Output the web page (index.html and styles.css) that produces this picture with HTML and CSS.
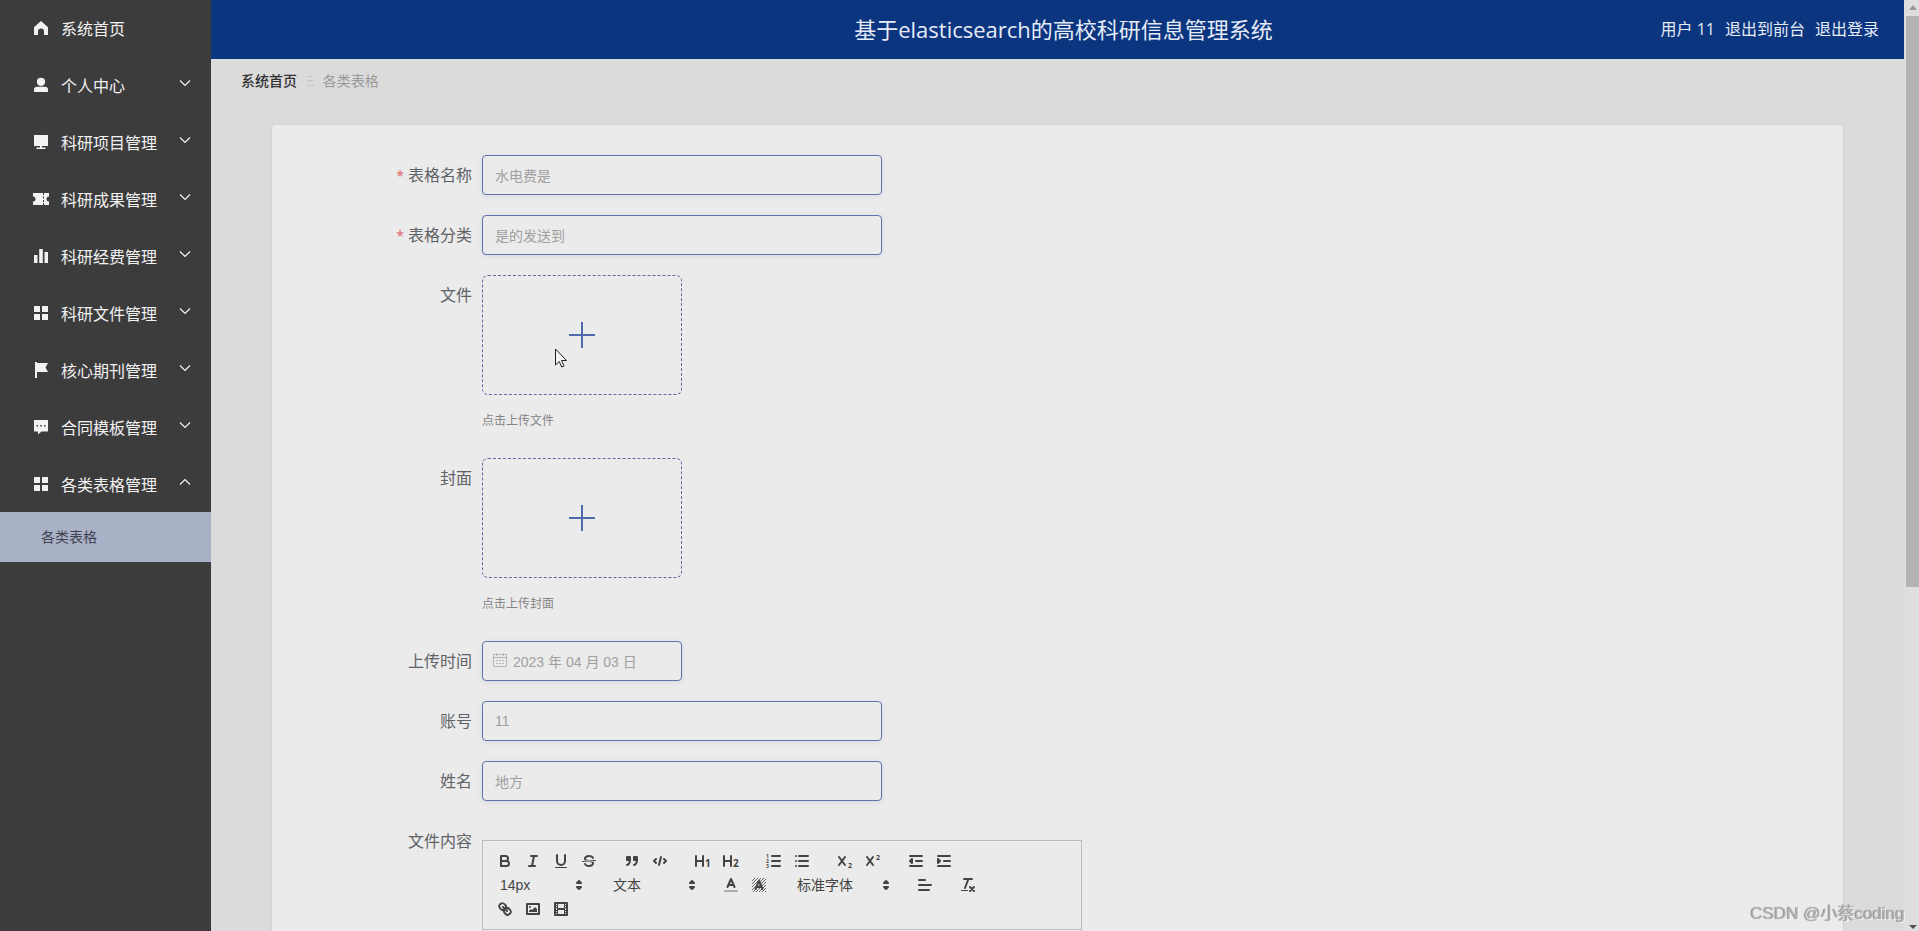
FILE: index.html
```html
<!DOCTYPE html>
<html lang="zh-CN">
<head>
  <meta charset="UTF-8">
  <meta name="viewport" content="width=device-width, initial-scale=1.0">
  <title>基于elasticsearch的高校科研信息管理系统</title>
  <link rel="stylesheet" href="styles.css">
</head>
<body>
  <!-- 公用图标 -->
  <svg class="sprite" aria-hidden="true">
    <symbol id="i-down" viewBox="0 0 12 12"><path d="M1 3.5l5 5 5-5" fill="none" stroke="currentColor" stroke-width="1.2"/></symbol>
    <symbol id="i-up" viewBox="0 0 12 12"><path d="M1 8.5l5-5 5 5" fill="none" stroke="currentColor" stroke-width="1.2"/></symbol>
    <symbol id="i-menu" viewBox="0 0 16 16"><path d="M1 1h6v6H1zM9 1h6v6H9zM1 9h6v6H1zM9 9h6v6H9z" fill="currentColor"/></symbol>
    <symbol id="i-plus" viewBox="0 0 28 28"><path d="M14 1v26M1 14h26" stroke="currentColor" stroke-width="2"/></symbol>
    <symbol id="i-picker" viewBox="0 0 18 18"><path class="stroke fill" d="M7 11l2 2 2-2zM7 7l2-2 2 2z"/></symbol>
  </svg>

  <div class="layout">
    <nav class="sidebar">
      <ul class="menu">
        <li><a class="menu-item" href="#">
          <svg class="menu-icon" viewBox="0 0 16 16"><path d="M8 1L1 7.2V15h4v-3.600a3 3 0 0 1 6 0V15h4V7.200z" fill="currentColor"/></svg>
          <span>系统首页</span></a></li>
        <li><a class="menu-item" href="#">
          <svg class="menu-icon" viewBox="0 0 16 16"><circle cx="8" cy="4.800" r="4.100" fill="currentColor"/><path d="M1 15v-2.500Q1 9.800 4 9.800h8q3 0 3 2.700V15z" fill="currentColor"/></svg>
          <span>个人中心</span><svg class="arrow"><use href="#i-down"/></svg></a></li>
        <li><a class="menu-item" href="#">
          <svg class="menu-icon" viewBox="0 0 16 16"><path d="M1 1h14v11H1zM7 12h2v1.500h3.500V15h-9v-1.500H7z" fill="currentColor"/></svg>
          <span>科研项目管理</span><svg class="arrow"><use href="#i-down"/></svg></a></li>
        <li><a class="menu-item" href="#">
          <svg class="menu-icon" viewBox="0 0 16 16"><path d="M0 2h10v2h1V2h5v3.500a2.500 2.500 0 0 0 0 5V14h-5v-2h-1v2H0v-3.500a2.500 2.500 0 0 0 0-5zM10 5.500v2h1v-2zM10 9v2h1V9z" fill="currentColor" fill-rule="evenodd"/></svg>
          <span>科研成果管理</span><svg class="arrow"><use href="#i-down"/></svg></a></li>
        <li><a class="menu-item" href="#">
          <svg class="menu-icon" viewBox="0 0 16 16"><path d="M1 7h3.500v8H1zM6.200 1h3.600v14H6.200zM11.500 4H15v11h-3.500z" fill="currentColor"/></svg>
          <span>科研经费管理</span><svg class="arrow"><use href="#i-down"/></svg></a></li>
        <li><a class="menu-item" href="#">
          <svg class="menu-icon"><use href="#i-menu"/></svg>
          <span>科研文件管理</span><svg class="arrow"><use href="#i-down"/></svg></a></li>
        <li><a class="menu-item" href="#">
          <svg class="menu-icon" viewBox="0 0 16 16"><path d="M2 0h2v1h11l-2.500 4.500L15 10H4v6H2z" fill="currentColor"/></svg>
          <span>核心期刊管理</span><svg class="arrow"><use href="#i-down"/></svg></a></li>
        <li><a class="menu-item" href="#">
          <svg class="menu-icon" viewBox="0 0 16 16"><path d="M1 1h14v11.500H8.500L5 15.500v-3H1zM3.500 6v1.500H5V6zM7.200 6v1.500h1.600V6zM11 6v1.500h1.500V6z" fill="currentColor" fill-rule="evenodd"/></svg>
          <span>合同模板管理</span><svg class="arrow"><use href="#i-down"/></svg></a></li>
        <li><a class="menu-item" href="#">
          <svg class="menu-icon"><use href="#i-menu"/></svg>
          <span>各类表格管理</span><svg class="arrow"><use href="#i-up"/></svg></a>
          <ul class="submenu">
            <li><a class="submenu-item" href="#">各类表格</a></li>
          </ul>
        </li>
      </ul>
    </nav>

    <div class="main">
      <header class="header">
        <h1 class="title">基于elasticsearch的高校科研信息管理系统</h1>
        <div class="user">
          <span>用户 11</span>
          <a href="#">退出到前台</a>
          <a href="#">退出登录</a>
        </div>
      </header>

      <div class="breadcrumb">
        <a href="#">系统首页</a>
        <span class="separator">Ξ</span>
        <span>各类表格</span>
      </div>

      <form class="card">
        <div class="form-item">
          <label class="required" for="name">表格名称</label>
          <input class="input" id="name" type="text" value="水电费是" readonly>
        </div>
        <div class="form-item">
          <label class="required" for="type">表格分类</label>
          <input class="input" id="type" type="text" value="是的发送到" readonly>
        </div>
        <div class="form-item">
          <label for="file">文件</label>
          <div>
            <button class="upload" id="file" type="button" aria-label="上传文件"><svg><use href="#i-plus"/></svg></button>
            <p class="tip">点击上传文件</p>
          </div>
        </div>
        <div class="form-item">
          <label for="cover">封面</label>
          <div>
            <button class="upload" id="cover" type="button" aria-label="上传封面"><svg><use href="#i-plus"/></svg></button>
            <p class="tip">点击上传封面</p>
          </div>
        </div>
        <div class="form-item">
          <label for="date">上传时间</label>
          <div class="date">
            <svg class="date-icon" viewBox="0 0 14 14"><path d="M.5 1.500h13v12H.5zM.5 4.500h13M3.500 0v3M10.500 0v3M3 7.500h2M6 7.500h2M9 7.500h2M3 10.500h2M6 10.500h2M9 10.500h2" fill="none" stroke="currentColor"/></svg>
            <input class="input" id="date" type="text" value="2023 年 04 月 03 日" readonly>
          </div>
        </div>
        <div class="form-item">
          <label for="account">账号</label>
          <input class="input" id="account" type="text" value="11" readonly>
        </div>
        <div class="form-item">
          <label for="realname">姓名</label>
          <input class="input" id="realname" type="text" value="地方" readonly>
        </div>
        <div class="form-item">
          <label for="content">文件内容</label>
          <div class="editor">
            <div class="toolbar">
              <span class="formats">
                <button type="button" aria-label="加粗"><svg viewBox="0 0 18 18"><path class="stroke" d="M5,4H9.5A2.5,2.5,0,0,1,9.500,9H5zM5,9h5.5A2.5,2.5,0,0,1,10.500,14H5z"/></svg></button>
                <button type="button" aria-label="斜体"><svg viewBox="0 0 18 18"><path class="stroke" d="M7 4h6M5 14h6M8 14L10 4"/></svg></button>
                <button type="button" aria-label="下划线"><svg viewBox="0 0 18 18"><path class="stroke" d="M5,3V9a4,4,0,0,0,8,0V3"/><rect class="fill" height="1" rx="0.5" width="12" x="3" y="15"/></svg></button>
                <button type="button" aria-label="删除线"><svg viewBox="0 0 18 18"><path class="stroke thin" d="M15.500 8.500L2.500 9.500"/><path class="fill" d="M9.007,8C6.542,7.791,6,7.519,6,6.5,6,5.792,7.283,5,9,5c1.571,0,2.765.679,2.969,1.309a1,1,0,0,0,1.9-.617C13.356,4.106,11.354,3,9,3,6.2,3,4,4.538,4,6.5a3.2,3.2,0,0,0,.5,1.843Z"/><path class="fill" d="M8.984,10C11.457,10.208,12,10.479,12,11.5c0,0.708-1.283,1.5-3,1.5-1.571,0-2.765-.679-2.969-1.309a1,1,0,1,0-1.9.617C4.644,13.894,6.646,15,9,15c2.8,0,5-1.538,5-3.5a3.2,3.2,0,0,0-.5-1.843Z"/></svg></button>
              </span>
              <span class="formats">
                <button type="button" aria-label="引用"><svg viewBox="0 0 18 18"><path class="stroke fill" d="M4 5h3v3H4zM11 5h3v3h-3z"/><path class="stroke" d="M7,8c0,4.031-3,5-3,5M14,8c0,4.031-3,5-3,5"/></svg></button>
                <button type="button" aria-label="代码块"><svg viewBox="0 0 18 18"><path class="stroke" d="M5 7L3 9l2 2M13 7l2 2-2 2M10 5L8 13"/></svg></button>
              </span>
              <span class="formats">
                <button type="button" aria-label="标题1"><svg viewBox="0 0 18 18"><path class="stroke" d="M2 4v10M9 4v10M2 9h7"/><text class="num" x="11" y="15">1</text></svg></button>
                <button type="button" aria-label="标题2"><svg viewBox="0 0 18 18"><path class="stroke" d="M2 4v10M9 4v10M2 9h7"/><text class="num" x="11" y="15">2</text></svg></button>
              </span>
              <span class="formats">
                <button type="button" aria-label="有序列表"><svg viewBox="0 0 18 18"><path class="stroke" d="M7 4h8M7 9h8M7 14h8"/><text class="tiny" x="1" y="6">1</text><text class="tiny" x="1" y="11">2</text><text class="tiny" x="1" y="16">3</text></svg></button>
                <button type="button" aria-label="无序列表"><svg viewBox="0 0 18 18"><path class="stroke" d="M6 4h9M6 9h9M6 14h9M3 4h0M3 9h0M3 14h0"/></svg></button>
              </span>
              <span class="formats">
                <button type="button" aria-label="下标"><svg viewBox="0 0 18 18"><path class="stroke" d="M3 5l6 8M9 5l-6 8"/><text class="sub" x="12" y="16">2</text></svg></button>
                <button type="button" aria-label="上标"><svg viewBox="0 0 18 18"><path class="stroke" d="M3 5l6 8M9 5l-6 8"/><text class="sub" x="12" y="8">2</text></svg></button>
              </span>
              <span class="formats">
                <button type="button" aria-label="减少缩进"><svg viewBox="0 0 18 18"><path class="stroke" d="M3 14h12M3 4h12M9 9h6"/><path class="stroke fill" d="M5 7v4L3 9z"/></svg></button>
                <button type="button" aria-label="增加缩进"><svg viewBox="0 0 18 18"><path class="stroke" d="M3 14h12M3 4h12M9 9h6"/><path class="stroke fill" d="M3 7v4l2-2z"/></svg></button>
              </span>
              <span class="formats picker">
                <select aria-label="字号"><option>14px</option></select>
                <svg><use href="#i-picker"/></svg>
              </span>
              <span class="formats picker">
                <select aria-label="段落"><option>文本</option></select>
                <svg><use href="#i-picker"/></svg>
              </span>
              <span class="formats">
                <button type="button" aria-label="文字颜色"><svg viewBox="0 0 18 18"><path class="stroke pale" d="M3 15h12"/><path class="stroke" d="M5.500 11L9 3l3.500 8M11.600 9H6.400"/></svg></button>
                <button type="button" aria-label="背景颜色"><svg viewBox="0 0 18 18"><path class="hatch" d="M2 5l3-3M2 8l6-6M2 11l9-9M2 14l12-12M3 16L16 3M6 16L16 6M9 16l7-7M12 16l4-4M15 16l1-1"/><path class="stroke" d="M5.500 13L9 5l3.500 8M11.600 11H6.400"/></svg></button>
              </span>
              <span class="formats picker picker-font">
                <select aria-label="字体"><option>标准字体</option></select>
                <svg><use href="#i-picker"/></svg>
              </span>
              <span class="formats">
                <button type="button" aria-label="对齐"><svg viewBox="0 0 18 18"><path class="stroke" d="M3 9h12M3 14h10M3 4h6"/></svg></button>
              </span>
              <span class="formats">
                <button type="button" aria-label="清除格式"><svg viewBox="0 0 18 18"><path class="stroke" d="M5 3h8M6 12L9.400 3M11 11l4 4M15 11l-4 4"/><rect class="fill" height="1" rx="0.5" width="7" x="2" y="14"/></svg></button>
              </span>
              <span class="formats">
                <button type="button" aria-label="链接"><svg viewBox="0 0 18 18"><path class="stroke" d="M7 7l4 4M8.9,4.577a3.476,3.476,0,0,1,.36,4.679A3.476,3.476,0,0,1,4.577,8.9C3.185,7.5,2.035,6.4,4.217,4.217S7.5,3.185,8.9,4.577ZM13.423,9.1a3.476,3.476,0,0,0-4.679-.36,3.476,3.476,0,0,0,.36,4.679c1.392,1.392,2.5,2.542,4.679.36S14.815,10.5,13.423,9.1Z"/></svg></button>
                <button type="button" aria-label="图片"><svg viewBox="0 0 18 18"><rect class="stroke" height="10" width="12" x="3" y="4"/><circle class="fill" cx="6" cy="7" r="1"/><path class="fill" d="M5 12v-1l2-2 1 1 3-3 2 2v3z"/></svg></button>
                <button type="button" aria-label="视频"><svg viewBox="0 0 18 18"><rect class="stroke" height="12" width="12" x="3" y="3"/><path class="fill" d="M5 3h1v12H5zM12 3h1v12h-1zM5 8h8v2H5zM3 5h3v1H3zM3 7h3v1H3zM3 10h3v1H3zM3 12h3v1H3zM12 5h3v1h-3zM12 7h3v1h-3zM12 10h3v1h-3zM12 12h3v1h-3z"/></svg></button>
              </span>
            </div>
            <textarea class="content" id="content"></textarea>
          </div>
        </div>
      </form>
    </div>

    <div class="scrollbar" aria-hidden="true">
      <svg viewBox="0 0 13 16"><path class="scroll-up" d="M3 10l4-5 4 5z"/></svg>
      <div class="thumb"></div>
      <svg viewBox="0 0 13 16"><path class="scroll-down" d="M3 10l4 4 4-4z"/></svg>
    </div>
  </div>

  <svg class="cursor" viewBox="0 0 13 20" aria-hidden="true"><path d="M.5 1v16l3.700-3.500 2.500 5.500 2.300-1-2.500-5.500h5z" fill="#f4f4f4" stroke="#222"/></svg>
  <div class="watermark">CSDN @小蔡coding</div>
</body>
</html>
```

FILE: styles.css
```css
* {
  box-sizing: border-box;
}
body {
  margin: 0;
  height: 100vh;
  overflow: hidden;
  font-family: "Open Sans", "Noto Sans CJK SC", sans-serif;
  font-size: 16px;
  background: #dbdbdb;
  color: #606266;
}
a {
  color: inherit;
  text-decoration: none;
}
ul {
  list-style: none;
  margin: 0;
  padding: 0;
}
.sprite {
  display: none;
}
.layout {
  display: flex;
  height: 100%;
}

/* 左侧菜单 */
.sidebar {
  flex: none;
  width: 211px;
  background: #3d3c3d;
  color: #f2f2f2;
}
.menu-item {
  display: flex;
  align-items: center;
  gap: 12px;
  height: 57px;
  padding: 0 20px 0 33px;
}
.menu > li:first-child .menu-item {
  height: 56px;
}
.menu-icon {
  width: 16px;
  height: 16px;
}
.arrow {
  width: 12px;
  height: 12px;
  margin: 0 0 4px auto;
}
.submenu-item {
  display: block;
  height: 50px;
  padding-left: 41px;
  line-height: 50px;
  font-size: 14px;
  background: #a9b1c6;
  color: #3f4352;
}

/* 顶部 */
.main {
  flex: 1;
  min-width: 0;
}
.header {
  display: grid;
  grid-template-columns: 1fr auto 1fr;
  align-items: center;
  height: 59px;
  padding: 0 25px 4px 37px;
  background: #0b357f;
  color: #e6ecf7;
}
.title {
  grid-column: 2;
  margin: 0;
  font-size: 22px;
  font-weight: 400;
}
.user {
  display: flex;
  justify-content: flex-end;
  gap: 10px;
}
.breadcrumb {
  display: flex;
  align-items: center;
  height: 42px;
  padding: 0 30px;
  font-size: 14px;
  color: #999;
}
.breadcrumb a {
  font-weight: 500;
  color: #303133;
}
.separator {
  margin: 0 9px;
  color: #c0c4cc;
}

/* 表单 */
.card {
  margin: 24px 61px 0;
  padding: 30px;
  background: #ebebeb;
  border-radius: 4px;
  box-shadow: 0 1px 3px #c4c4c4;
}
.form-item {
  display: flex;
  align-items: flex-start;
  margin-bottom: 20px;
}
.form-item > label {
  flex: none;
  width: 180px;
  padding-right: 10px;
  line-height: 40px;
  text-align: right;
}
.required::before {
  content: "*";
  margin-right: 4px;
  font-size: 14px;
  line-height: 1;
  color: #e0606a;
}
.input {
  width: 400px;
  height: 40px;
  padding: 0 12px;
  border: 1px solid #6072aa;
  border-radius: 4px;
  box-shadow: 0 1px 5px #d5d7e6;
  background: #ebebeb;
  color: #a0a0a0;
  font: 14px "Liberation Sans", "Noto Sans CJK SC", sans-serif;
}
.upload {
  display: flex;
  align-items: center;
  justify-content: center;
  width: 200px;
  height: 120px;
  border: 1px dashed #6069a0;
  border-radius: 6px;
  background: none;
  color: #5069ad;
}
.upload svg {
  width: 28px;
  height: 28px;
}
.tip {
  margin: 16px 0 7px;
  font-size: 12px;
  line-height: 20px;
  color: #858585;
}
.date {
  position: relative;
}
.date .input {
  display: block;
  width: 200px;
  padding-left: 30px;
}
.date-icon {
  position: absolute;
  left: 11px;
  top: 12px;
  width: 14px;
  height: 14px;
  color: #b5b5b5;
}

/* 富文本编辑器 */
.editor {
  width: 600px;
  margin-top: 19px;
}
.toolbar {
  display: flex;
  flex-wrap: wrap;
  padding: 8px;
  border: 1px solid #bbb;
}
.formats {
  display: flex;
  margin-right: 15px;
}
.formats button {
  width: 28px;
  height: 24px;
  padding: 3px 5px;
  border: 0;
  background: none;
}
.formats svg {
  display: block;
  width: 18px;
  height: 18px;
}
.picker {
  position: relative;
  width: 98px;
  height: 24px;
}
.picker-font {
  width: 108px;
}
.picker select {
  width: 100%;
  padding: 0 9px;
  border: 0;
  appearance: none;
  background: none;
  color: #444;
  font: 14px "Liberation Sans", "Noto Sans CJK SC", sans-serif;
}
.picker svg {
  position: absolute;
  right: 1px;
  top: 3px;
  pointer-events: none;
}
.stroke {
  fill: none;
  stroke: #444;
  stroke-width: 2;
  stroke-linecap: round;
  stroke-linejoin: round;
}
.thin {
  stroke-width: 1;
}
.hatch {
  fill: none;
  stroke: #666;
  stroke-width: 1;
}
.pale {
  stroke: #aaa;
}
.fill {
  fill: #444;
}
.num {
  font: bold 10px "Open Sans", sans-serif;
  fill: #444;
}
.sub {
  font: bold 7px "Open Sans", sans-serif;
  fill: #444;
}
.tiny {
  font: bold 5px "Open Sans", sans-serif;
  fill: #444;
}
.content {
  display: block;
  width: 100%;
  height: 300px;
  border: 1px solid #bbb;
  border-top: 0;
  background: none;
}

/* 滚动条 */
.scrollbar {
  display: flex;
  flex-direction: column;
  justify-content: space-between;
  flex: none;
  width: 15px;
  padding-left: 2px;
  background: #dedede;
}
.scrollbar svg {
  width: 13px;
  height: 16px;
}
.thumb {
  height: 571px;
  margin-bottom: auto;
  background: #b3b3b3;
}
.scroll-up {
  fill: #999;
}
.scroll-down {
  fill: #505050;
}
.cursor {
  position: absolute;
  left: 555px;
  top: 348px;
  width: 13px;
  height: 20px;
}
.watermark {
  position: fixed;
  right: 14px;
  bottom: 7px;
  font: 17px "Liberation Sans", "Noto Sans CJK SC", sans-serif;
  color: #b4b4b4;
  text-shadow: -1px 0 1px #858585, 1px 1px 0 #f2f2f2;
}
```
